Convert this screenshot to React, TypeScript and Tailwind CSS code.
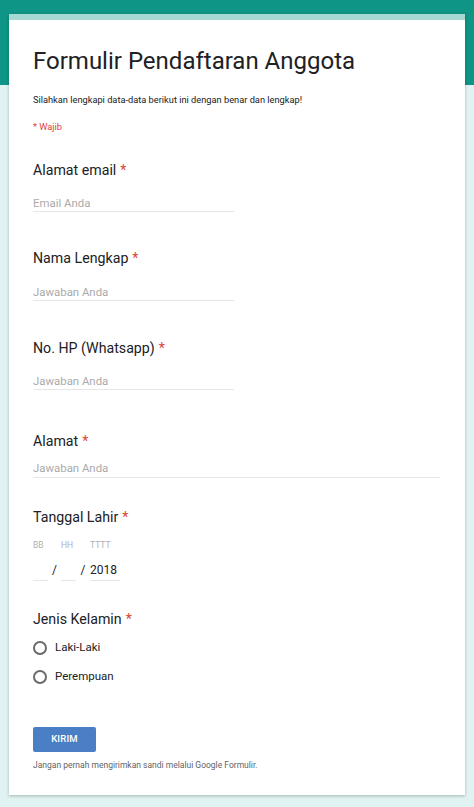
import React from "react";

const Req = () => <span className="text-[#db4437] ml-[4px]">*</span>;

function Label({ children }: { children: React.ReactNode }) {
  return (
    <div className="text-[14.2px] leading-[18px] text-[#202124]">
      {children}
      <Req />
    </div>
  );
}

function TextField({ placeholder, wide }: { placeholder: string; wide?: boolean }) {
  return (
    <div className={(wide ? "w-[407px] pb-[2px]" : "w-[201px] pb-[1px]") + " border-b border-[#e6e6e6]"}>
      <div className="text-[11.4px] leading-[14px] text-[#aaaaaa]">{placeholder}</div>
    </div>
  );
}

function Radio({ label }: { label: string }) {
  return (
    <div className="flex items-center gap-[8px] h-[20px]">
      <div className="w-[14px] h-[14px] rounded-full border-[2px] border-[#6b6b6b]" />
      <div className="text-[11.5px] text-[#202124]">{label}</div>
    </div>
  );
}

function DatePart({ top, w, value }: { top: string; w: string; value?: string }) {
  return (
    <div className="flex flex-col">
      <div className="text-[8.5px] leading-[10px] text-[#b0b0b0] mb-[10px]">{top}</div>
      <div className={w + " h-[21px] border-b border-[#e6e6e6] text-[12px] leading-[20px] text-[#202124]"}>
        {value}
      </div>
    </div>
  );
}

export default function App() {
  return (
    <div
      className="min-h-[807px] w-[474px] bg-[linear-gradient(#0e9585_0,#0e9585_85px,#e0f2f1_85px)] pt-[14px] px-[9px] pb-[12px]"
      style={{ fontFamily: "Roboto, 'Noto Sans', sans-serif" }}
    >
      <div className="bg-white border-t-[6px] border-[#a7d8d3] shadow-[0_1px_3px_rgba(0,0,0,0.25)] px-[24px] pt-[26px] h-[781px]">
        <h1 className="text-[24px] leading-[30px] text-[#202124] font-normal">
          Formulir Pendaftaran Anggota
        </h1>
        <p className="mt-[18px] text-[9.25px] leading-[12px] text-[#202124]">
          Silahkan lengkapi data-data berikut ini dengan benar dan lengkap!
        </p>
        <p className="mt-[15px] text-[9.25px] leading-[12px] text-[#db4437]">* Wajib</p>

        <div className="mt-[28px]">
          <Label>Alamat email</Label>
          <div className="mt-[17px]">
            <TextField placeholder="Email Anda" />
          </div>
        </div>

        <div className="mt-[37px]">
          <Label>Nama Lengkap</Label>
          <div className="mt-[18px]">
            <TextField placeholder="Jawaban Anda" />
          </div>
        </div>

        <div className="mt-[38px]">
          <Label>No. HP (Whatsapp)</Label>
          <div className="mt-[17px]">
            <TextField placeholder="Jawaban Anda" />
          </div>
        </div>

        <div className="mt-[42px]">
          <Label>Alamat</Label>
          <div className="mt-[11px]">
            <TextField placeholder="Jawaban Anda" wide />
          </div>
        </div>

        <div className="mt-[30px]">
          <Label>Tanggal Lahir</Label>
          <div className="mt-[14px] flex items-end">
            <DatePart top="BB" w="w-[15px]" />
            <div className="w-[13px] h-[21px] text-[12px] leading-[20px] text-center text-[#202124]">/</div>
            <DatePart top="HH" w="w-[15px]" />
            <div className="w-[14px] h-[21px] text-[12px] leading-[20px] text-center text-[#202124]">/</div>
            <DatePart top="TTTT" w="w-[30px]" value="2018" />
          </div>
        </div>

        <div className="mt-[29px]">
          <Label>Jenis Kelamin</Label>
          <div className="mt-[10px] flex flex-col gap-[9px]">
            <Radio label="Laki-Laki" />
            <Radio label="Perempuan" />
          </div>
        </div>

        <button className="mt-[40px] w-[63px] h-[25px] rounded-[2px] bg-[#4a7fc5] text-white text-[9.5px] font-medium tracking-[0.2px] block">
          KIRIM
        </button>
        <p className="mt-[8px] text-[8.5px] leading-[11px] text-[#5f6368]">
          Jangan pernah mengirimkan sandi melalui Google Formulir.
        </p>
      </div>
    </div>
  );
}
